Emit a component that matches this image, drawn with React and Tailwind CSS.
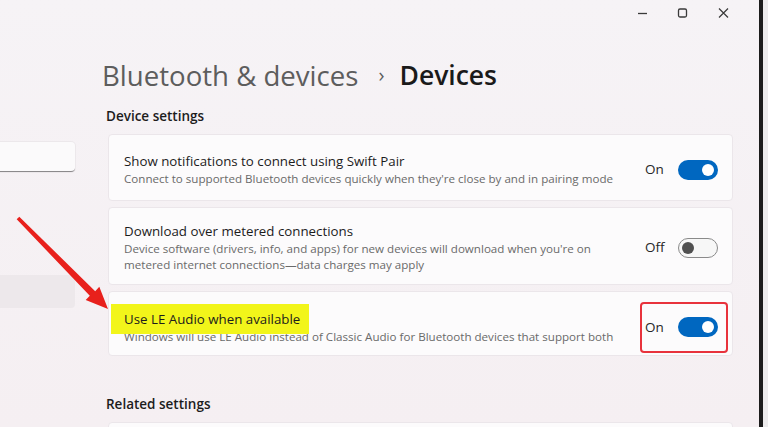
import React from "react";

function Toggle({ on }) {
  if (on) {
    return (
      <div className="w-10 h-5 rounded-full bg-[#0067c0] flex items-center justify-end pr-[4px]">
        <div className="w-[12px] h-[12px] rounded-full bg-white" />
      </div>
    );
  }
  return (
    <div className="w-10 h-5 rounded-full border border-[#8a8a8a] bg-[#f7f7f7] flex items-center pl-[3px]">
      <div className="w-[12px] h-[12px] rounded-full bg-[#505050]" />
    </div>
  );
}

function Card({ title, desc, state, on, h, pt, highlight, children }) {
  return (
    <div
      className={`bg-[#fcfbfc] border border-[#ebe6ea] rounded-[4px] flex items-center pl-[15px] pr-[14px] ${h} ${pt}`}
    >
      <div className="flex-1 flex flex-col">
        <div className="relative text-[13.3px] leading-[18px] text-[#1c1c1c]">
          {highlight && (
            <span className="absolute left-[-13px] top-[-6px] w-[198px] h-[30px] bg-[#f2f51a]" />
          )}
          <span className="relative">{title}</span>
        </div>
        <div className="text-[11.6px] leading-[16px] text-[#6a6a6a] mt-[1px]">{desc}</div>
      </div>
      <div className="flex items-center">
        <span className="text-[13.5px] text-[#262626] w-[33px]">{state}</span>
        <Toggle on={on} />
      </div>
      {children}
    </div>
  );
}

export default function App() {
  return (
    <div
      className="w-[768px] h-[427px] overflow-hidden flex bg-[#ebeaeb]"
      style={{ fontFamily: '"Open Sans", "Noto Sans", sans-serif' }}
    >
      <div className="relative w-[759px] h-full bg-gradient-to-b from-[#f6f3f6] to-[#f5eff2] flex flex-col">
        {/* title bar */}
        <div className="h-[28px] flex justify-end items-center pr-[16px] text-[#333]">
          <svg width="40" height="26" viewBox="0 0 40 26">
            <line x1="15" y1="13.5" x2="24" y2="13.5" stroke="#3a3a3a" strokeWidth="1.3" />
          </svg>
          <svg width="40" height="26" viewBox="0 0 40 26">
            <rect x="15.5" y="9" width="8" height="8" rx="1.5" fill="none" stroke="#3a3a3a" strokeWidth="1.3" />
          </svg>
          <svg width="40" height="26" viewBox="0 0 40 26">
            <path d="M16 8.5 L25 17.5 M25 8.5 L16 17.5" stroke="#3a3a3a" strokeWidth="1.2" />
          </svg>
        </div>

        <div className="flex flex-1">
          {/* sidebar */}
          <div className="w-[75px] flex flex-col">
            <div className="mt-[116px] h-[30px] bg-[#fbfafb] rounded-r-[4px] border-b border-[#8c8a8c] shadow-[0_0_0_1px_#ece8eb]" />
            <div className="mt-[103px] h-[33px] bg-[#ede8eb] rounded-r-[4px]" />
          </div>

          {/* main */}
          <div className="ml-[33px] w-[625px] flex flex-col">
            <div className="mt-[30px] h-[38px] flex items-center -ml-[6px] leading-[38px]">
              <span className="text-[#5d5d5d] text-[27.6px]">Bluetooth &amp; devices</span>
              <span className="text-[#5d5d5d] text-[20px] ml-[20px] mr-[15px]">›</span>
              <span className="text-[#1a1a1a] font-semibold text-[26.5px]">Devices</span>
            </div>
            <div className="mt-[13px] text-[13.5px] font-semibold text-[#1c1c1c] -ml-[2px] leading-[18px]">
              Device settings
            </div>
            <div className="mt-[9px] flex flex-col gap-[6px]">
              <Card
                h="h-[67px]"
                pt="pt-[4px]"
                title="Show notifications to connect using Swift Pair"
                desc="Connect to supported Bluetooth devices quickly when they're close by and in pairing mode"
                state="On"
                on
              />
              <Card
                h="h-[78px]"
                pt="pt-[3px]"
                title="Download over metered connections"
                desc={
                  <>
                    Device software (drivers, info, and apps) for new devices will download when you're on
                    <br />
                    metered internet connections—data charges may apply
                  </>
                }
                state="Off"
                on={false}
              />
              <Card
                h="h-[65px] relative"
                pt="pt-[7px]"
                title="Use LE Audio when available"
                desc="Windows will use LE Audio instead of Classic Audio for Bluetooth devices that support both"
                state="On"
                on
                highlight
              >
                <div className="absolute left-[531px] top-[10px] w-[88px] h-[51px] border-2 border-[#e8323c] rounded-[4px]" />
              </Card>
            </div>
            <div className="mt-[39px] text-[13.5px] font-semibold text-[#1c1c1c] -ml-[2px] leading-[18px]">
              Related settings
            </div>
            <div className="mt-[9px] h-[20px] bg-[#fcfbfc] border border-[#ebe6ea] rounded-t-[4px]" />
          </div>
        </div>

        {/* red arrow annotation */}
        <svg className="absolute left-0 top-0 pointer-events-none" width="759" height="427">
          <polygon
            points="19.3,216.7 95.2,291.2 99.3,286.7 108,309 85.7,300.1 89.8,295.7 16.7,219.3"
            fill="#e8201c"
          />
        </svg>
      </div>
      <div className="w-[4px] h-full bg-[#1c1c1c]" />
      <div className="flex-1 h-full bg-[#ecebec]" />
    </div>
  );
}
